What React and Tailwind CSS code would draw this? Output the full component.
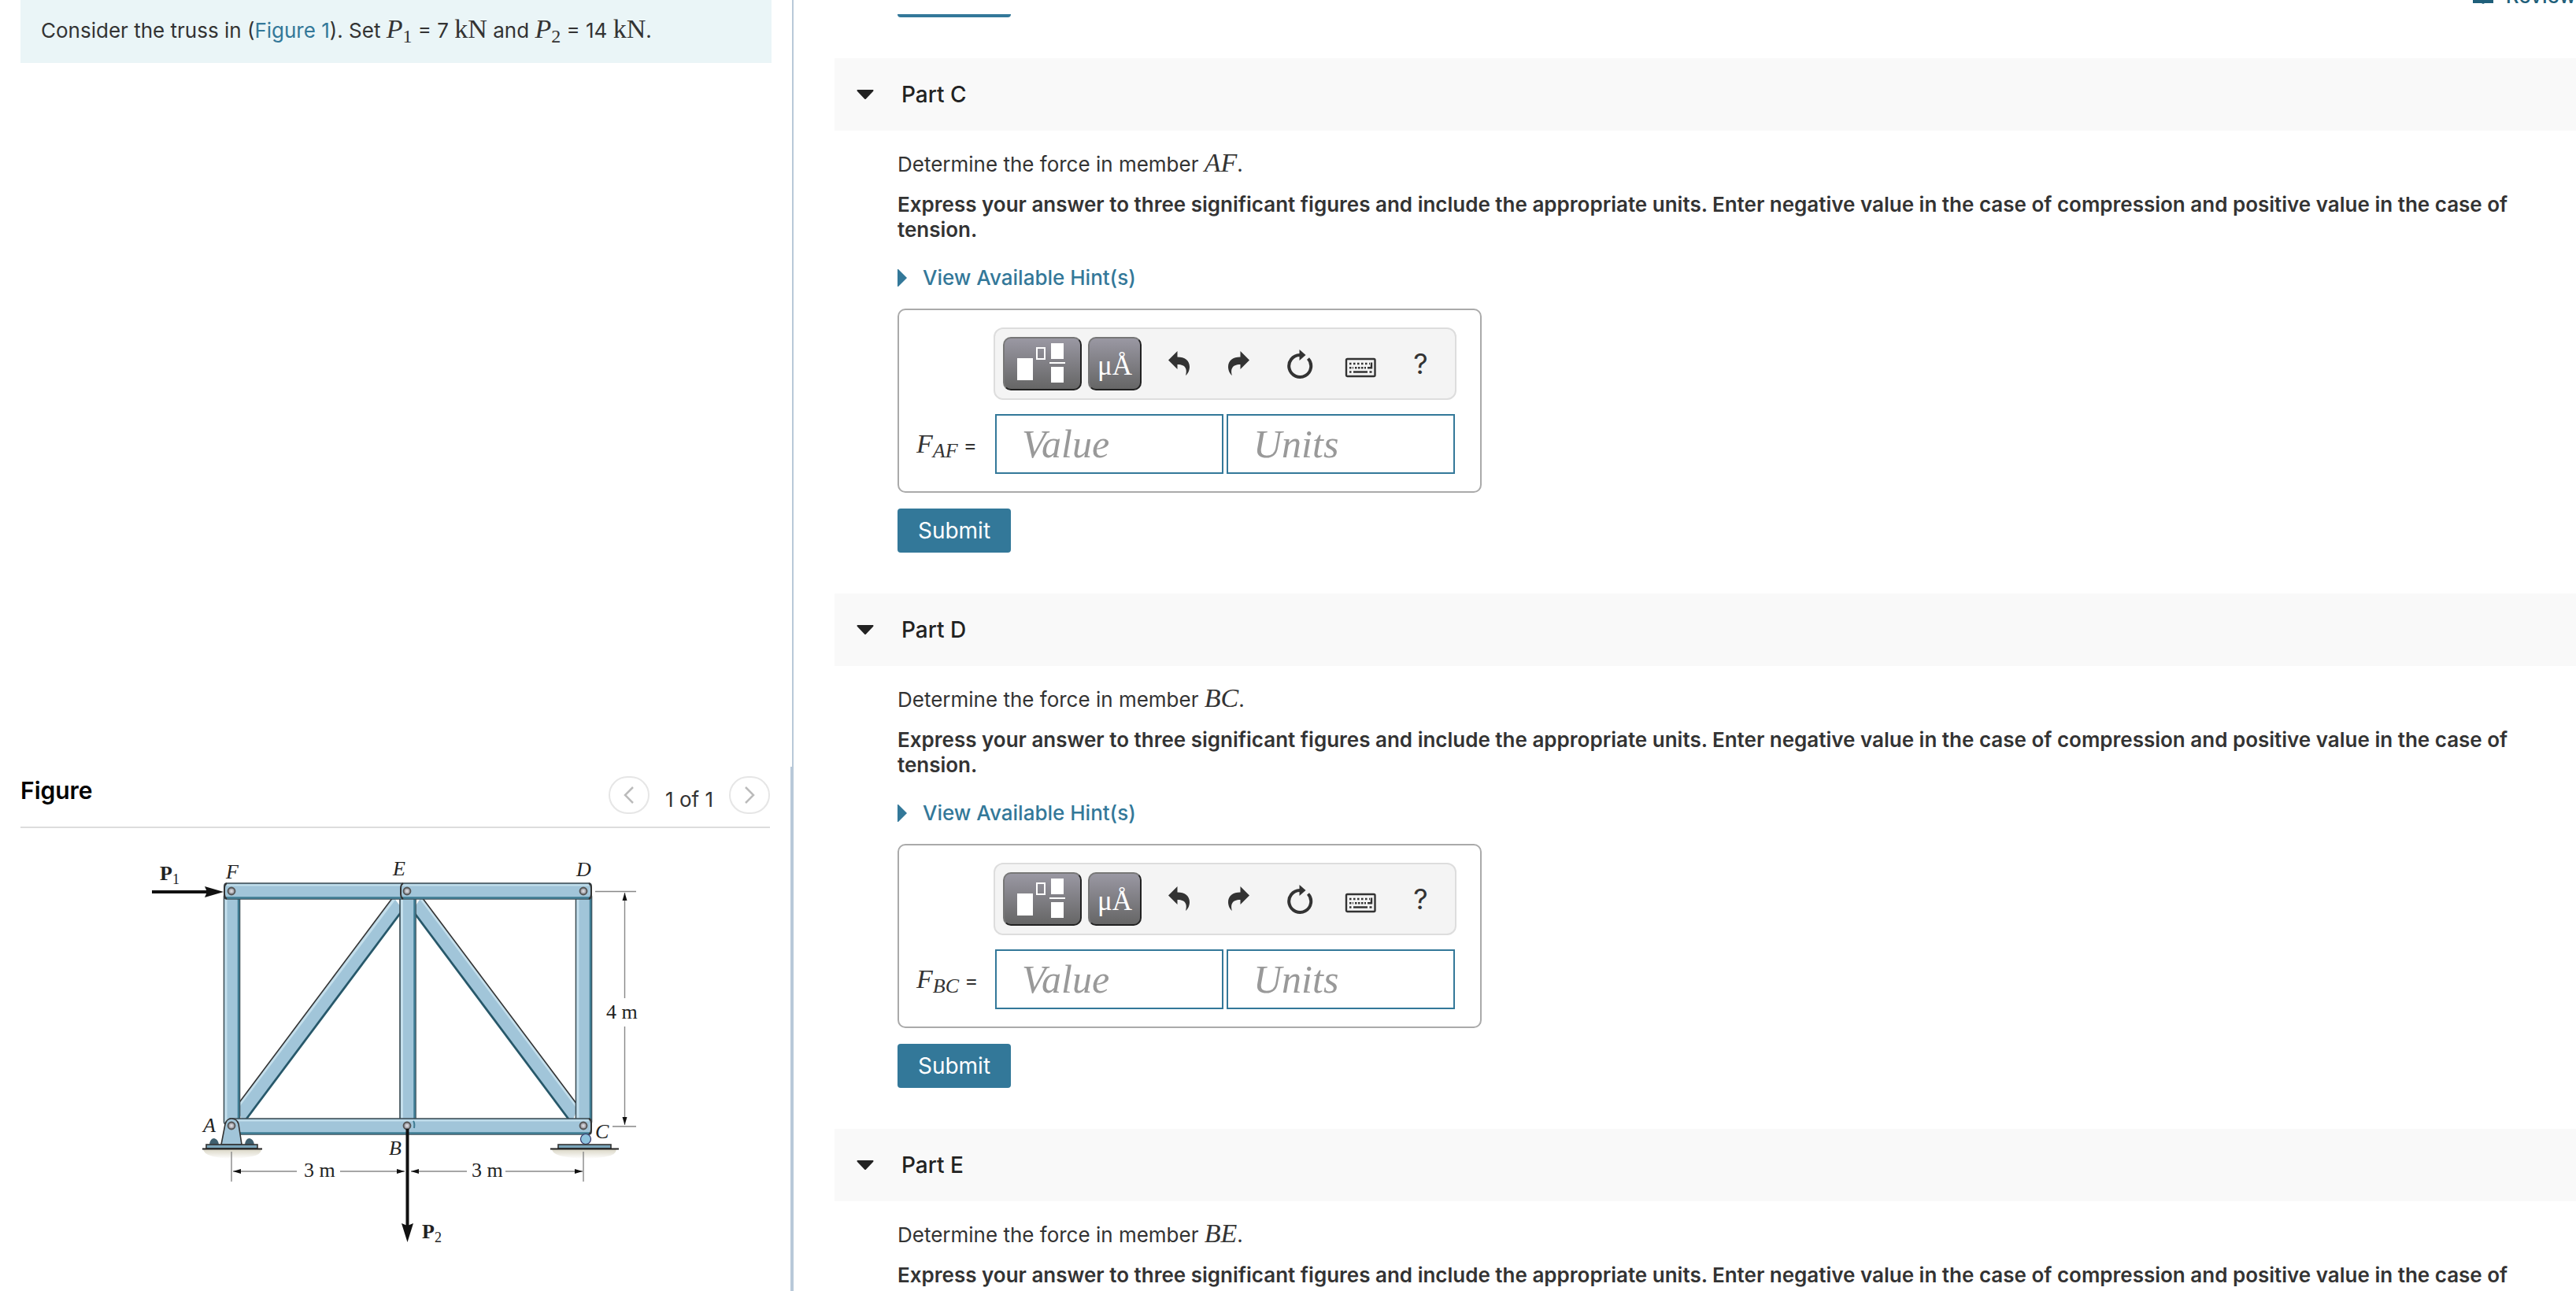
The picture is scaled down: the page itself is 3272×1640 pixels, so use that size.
import { useState } from 'react';

const PARTS = [
  { letter: 'C', member: 'AF' },
  { letter: 'D', member: 'BC' },
  { letter: 'E', member: 'BE' },
];

const PINS = [
  [294, 1132],
  [517, 1132],
  [741, 1132],
  [294, 1430],
  [517, 1430],
  [741, 1430],
];

function Math({ children, upright }) {
  return (
    <span className={`font-['Liberation_Serif',serif] text-[34px] leading-none ${upright ? '' : 'italic'}`}>
      {children}
    </span>
  );
}

function Sub({ children }) {
  return <sub className="text-[24px] leading-none not-italic">{children}</sub>;
}

function UndoIcon({ className }) {
  return (
    <svg viewBox="0 0 40 40" className={`size-10 ${className || ''}`} fill="#333">
      <path d="M7 15.500 18.500 4v7.500C28 11.500 34 16 34 24c0 5-2.500 9-5 11 2-7 1-14-10.500-14v6z" />
    </svg>
  );
}

function ResetIcon() {
  return (
    <svg viewBox="0 0 40 40" className="size-10">
      <path d="M30.500 13.500A14 14 0 1 1 20 9" fill="none" stroke="#333" strokeWidth="4" />
      <path d="M19.500 2 27.500 9 19.500 16z" fill="#333" />
    </svg>
  );
}

function KeyboardIcon() {
  return (
    <svg viewBox="0 0 40 40" className="size-10">
      <rect x="2" y="14" width="36.500" height="22" rx="1.500" fill="none" stroke="#333" strokeWidth="2.400" />
      <g stroke="#333" strokeWidth="2.400" fill="none">
        <path d="M6 20h26" strokeDasharray="2.500 2.500" />
        <path d="M6 25.200h5M13 25.200h14" strokeDasharray="2.500 1.500" />
        <path d="M34 18.500v6.700h-5" />
        <path d="M6 30.500h2.500M11 30.500h18M31.500 30.500h3" />
      </g>
    </svg>
  );
}

function TemplateIcon() {
  return (
    <svg viewBox="0 0 64 52" className="h-[52px] w-16" fill="#fff">
      <rect x="0" y="19" width="20" height="28" />
      <rect x="25" y="6" width="10" height="14" fill="none" stroke="#fff" strokeWidth="2" />
      <rect x="43" y="0" width="16" height="20" />
      <rect x="41" y="24" width="20" height="2" />
      <rect x="43" y="30" width="16" height="20" />
    </svg>
  );
}

function Toolbar() {
  const dark =
    'flex h-[68px] items-center justify-center rounded-[10px] border-2 border-t-[#777] border-l-[#777] border-r-[#222] border-b-[#222] bg-linear-to-b from-[#9a98a3] to-[#666] text-white';
  const plain = 'flex h-[68px] w-[77px] items-center justify-center text-[#333]';
  return (
    <div className="flex h-[92px] items-center rounded-xl border-2 border-[#ddd] bg-[#f4f4f4] pl-2.5">
      <button type="button" aria-label="Templates" className={`${dark} w-[100px]`}>
        <TemplateIcon />
      </button>
      <button type="button" className={`${dark} ml-2 w-[68px] pt-1.5 font-['Liberation_Serif',serif] text-[35px]`}>
        μÅ
      </button>
      <div className="ml-2 flex">
        <button type="button" aria-label="Undo" className={plain}>
          <UndoIcon />
        </button>
        <button type="button" aria-label="Redo" className={plain}>
          <UndoIcon className="-scale-x-100" />
        </button>
        <button type="button" aria-label="Reset" className={plain}>
          <ResetIcon />
        </button>
        <button type="button" aria-label="Keyboard shortcuts" className={plain}>
          <KeyboardIcon />
        </button>
        <button type="button" className={`${plain} text-[36px]`}>
          ?
        </button>
      </div>
    </div>
  );
}

function AnswerBox({ member }) {
  const [value, setValue] = useState('');
  const [units, setUnits] = useState('');
  const field =
    "h-[76px] w-[290px] border-2 border-[#337899] bg-white pl-8 font-['Liberation_Serif',serif] text-[50px] italic text-[#333] placeholder:text-[#999] outline-none";
  return (
    <div className="mt-[23px] grid w-fit grid-cols-[98px_588px] gap-y-[18px] rounded-[10px] border-2 border-[#aaa] py-[22px] pr-[30px] pl-[22px]">
      <div className="col-start-2">
        <Toolbar />
      </div>
      <label htmlFor={`value-${member}`} className="flex items-center whitespace-nowrap">
        <span>
          <Math>
            F<sub className="text-[26px] leading-none">{member}</sub>
          </Math>{' '}
          =
        </span>
      </label>
      <div className="flex gap-1 pl-0.5">
        <input
          id={`value-${member}`}
          className={field}
          placeholder="Value"
          value={value}
          onChange={(e) => setValue(e.target.value)}
        />
        <input
          aria-label="Units"
          className={field}
          placeholder="Units"
          value={units}
          onChange={(e) => setUnits(e.target.value)}
        />
      </div>
    </div>
  );
}

function Part({ letter, member }) {
  return (
    <section>
      <h2>
        <button type="button" className="flex h-[92px] w-full items-center bg-[#f9f9f9] pl-7 text-[28px] font-medium text-[#222]">
          <svg viewBox="0 0 22 12" className="mr-[35px] h-3 w-[22px]" fill="#222">
            <path d="M1 0h20q1 1 0 2l-9 9.500q-1 1-2 0L1 2Q0 1 1 0z" />
          </svg>
          Part {letter}
        </button>
      </h2>
      <div className="pt-6 pr-20 pb-[52px] pl-20">
        <p className="h-8">
          Determine the force in member <Math>{member}</Math>.
        </p>
        <p className="mt-[22px] font-semibold">
          Express your answer to three significant figures and include the appropriate units. Enter negative value in
          the case of compression and positive value in the case of tension.
        </p>
        <button type="button" className="mt-[29px] flex h-8 items-center font-medium text-[#337899]">
          <svg viewBox="0 0 12 22" className="mr-5 h-[22px] w-3" fill="#337899">
            <path d="M0 0h1l11 11L1 22H0z" />
          </svg>
          View Available Hint(s)
        </button>
        <AnswerBox member={member} />
        <button type="button" className="mt-5 block h-14 w-36 rounded-[4px] bg-[#337899] text-[28px] text-white">
          Submit
        </button>
      </div>
    </section>
  );
}

// straight member: body, light edge on the upper left, dark edge on the lower right
function Beam({ x, y, w, h }) {
  const flat = w > h;
  return (
    <g>
      <rect x={x} y={y} width={w} height={h} rx="3" fill="#a1c5d9" stroke="#3a4a52" strokeWidth="1.600" />
      {flat ? (
        <>
          <path d={`M${x + 3} ${y + 2.5}h${w - 6}`} stroke="#c4dfec" strokeWidth="2" />
          <path d={`M${x + 2} ${y + h - 1.5}h${w - 4}`} stroke="#3f7c93" strokeWidth="2.500" />
        </>
      ) : (
        <>
          <path d={`M${x + 2.5} ${y + 2}v${h - 4}`} stroke="#c4dfec" strokeWidth="3" />
          <path d={`M${x + w - 1.5} ${y + 2}v${h - 4}`} stroke="#3f7c93" strokeWidth="2.500" />
        </>
      )}
    </g>
  );
}

function Truss() {
  return (
    <svg
      viewBox="180 1080 640 510"
      className="ml-[180px] h-[510px] w-[640px]"
      fontFamily="'Liberation Serif', serif"
      fontSize="26"
      fill="#222"
      role="img"
      aria-label="Truss ABCDEF"
    >
      <defs>
        <radialGradient id="pin">
          <stop offset="0" stopColor="#e8e8ec" />
          <stop offset="1" stopColor="#85858d" />
        </radialGradient>
        <linearGradient id="ground" x1="0" y1="0" x2="0" y2="1">
          <stop offset="0" stopColor="#d6d2c0" />
          <stop offset="1" stopColor="#fff" />
        </linearGradient>
        <marker id="tip" viewBox="0 0 10 8" markerWidth="10" markerHeight="8" refX="10" refY="4" orient="auto-start-reverse" markerUnits="userSpaceOnUse">
          <path d="M0 1 10 4 0 7z" fill="#111" />
        </marker>
      </defs>

      {/* ground under the supports */}
      <path d="M258 1459h74q0 8-12 10-26 6-50 0-12-3-12-10z" fill="url(#ground)" />
      <path d="M701 1459h82q0 8-12 10-28 6-56 0-14-3-14-10z" fill="url(#ground)" />

      {/* diagonals */}
      <path d="M500 1140 300 1406 309 1426 512 1156z" fill="#a1c5d9" />
      <path d="M501 1142 303 1405" stroke="#c4dfec" strokeWidth="3" />
      <path d="M499 1140 302 1403" stroke="#333" strokeWidth="1.600" />
      <path d="M510 1158 311 1424" stroke="#27586a" strokeWidth="2.800" />
      <path d="M535 1140 735 1406 726 1426 524 1156z" fill="#a1c5d9" />
      <path d="M535 1142 732 1405" stroke="#c4dfec" strokeWidth="3" />
      <path d="M536 1140 733 1403" stroke="#333" strokeWidth="1.600" />
      <path d="M525 1158 724 1424" stroke="#27586a" strokeWidth="2.800" />

      {/* posts and chords */}
      <Beam x={284.5} y={1136} w={20} h={292} />
      <Beam x={508} y={1136} w={20} h={292} />
      <Beam x={731.5} y={1136} w={20} h={292} />
      <Beam x={285} y={1122} w={466} h={20} />
      <Beam x={290} y={1421} w={461} h={20} />
      <path d="M512 1122q-3 2-3 6v8q0 4 3 6" fill="none" stroke="#333" strokeWidth="2" />
      <path d="M288 1122q-3 2-3 6v8q0 4 3 6" fill="none" stroke="#333" strokeWidth="2" />
      <path d="M748 1122q3 2 3 6v8q0 4-3 6" fill="none" stroke="#333" strokeWidth="2" />
      <path d="M748 1421q3 2 3 6v8q0 4-3 6" fill="none" stroke="#333" strokeWidth="2" />
      <path d="M525 1424q2 3 1 9" fill="none" stroke="#3f7c93" strokeWidth="2" />

      {/* pin support A */}
      <path d="M281 1454 286 1428q2-7 8-7 7 0 9 7l4 26z" fill="#a1c5d9" stroke="#333" strokeWidth="1.600" />
      <path d="M266 1454q1-8 6-8 5 1 6 8zM311 1454q1-8 6-8 5 1 6 8z" fill="#3f5f6e" />
      <rect x="262" y="1454" width="65" height="5" fill="#7aa5ba" stroke="#333" strokeWidth="1.600" />
      <path d="M257 1459.500h76" stroke="#222" strokeWidth="2" />

      {/* roller support C */}
      <circle cx="744" cy="1447" r="6.500" fill="#8ec3de" stroke="#336" strokeWidth="1.200" />
      <rect x="709" y="1454" width="67" height="5" fill="#7aa5ba" stroke="#333" strokeWidth="1.600" />
      <path d="M699 1459.500h87" stroke="#222" strokeWidth="2" />

      {PINS.map(([x, y]) => (
        <circle key={`${x}-${y}`} cx={x} cy={y} r="4.500" fill="url(#pin)" stroke="#555" strokeWidth="1.800" />
      ))}

      {/* dimensions */}
      <g stroke="#888" strokeWidth="1.400">
        <path d="M756 1132.500h52M778 1431h30M294 1463v38M741 1463v38" />
        <path d="M793.500 1268V1134" markerEnd="url(#tip)" />
        <path d="M793.500 1304v125" markerEnd="url(#tip)" />
        <path d="M377 1488h-81" markerEnd="url(#tip)" />
        <path d="M432 1488h82" markerEnd="url(#tip)" />
        <path d="M593 1488h-71" markerEnd="url(#tip)" />
        <path d="M642 1488h98" markerEnd="url(#tip)" />
      </g>

      {/* loads */}
      <path d="M193 1133h70" stroke="#111" strokeWidth="4" />
      <path d="M260 1126 284 1133 260 1140 263 1133z" fill="#111" />
      <path d="M517.500 1434v124" stroke="#111" strokeWidth="4" />
      <path d="M510 1554 517.500 1578 525 1554 517.500 1557z" fill="#111" />

      <text x="203" y="1118" fontWeight="bold">P</text>
      <text x="219" y="1123" fontSize="18">1</text>
      <text x="536" y="1573" fontWeight="bold">P</text>
      <text x="552" y="1578" fontSize="18">2</text>
      <g fontStyle="italic">
        <text x="287" y="1116">F</text>
        <text x="499" y="1112">E</text>
        <text x="732" y="1113">D</text>
        <text x="258" y="1438">A</text>
        <text x="494" y="1467">B</text>
        <text x="756" y="1446">C</text>
      </g>
      <text x="770" y="1294">4 m</text>
      <text x="386" y="1495">3 m</text>
      <text x="599" y="1495">3 m</text>
    </svg>
  );
}

function FigurePanel() {
  const circle = 'flex h-12 w-[52px] items-center justify-center rounded-full border-2 border-[#e6e6e6]';
  return (
    <div className="h-[666px] border-r-2 border-[#b9c9d9]">
      <div className="mr-[26px] ml-[26px] flex h-[78px] items-start border-b-2 border-[#ddd] pt-3">
        <h2 className="flex-1 text-[30px] leading-9 font-semibold text-black">Figure</h2>
        <button type="button" aria-label="Previous figure" className={circle}>
          <svg viewBox="0 0 14 22" className="h-[22px] w-3.5" fill="none" stroke="#bbb" strokeWidth="2.500">
            <path d="M12 1 2 11l10 10" />
          </svg>
        </button>
        <span className="px-5 pt-3.5">1 of 1</span>
        <button type="button" aria-label="Next figure" className={circle}>
          <svg viewBox="0 0 14 22" className="h-[22px] w-3.5" fill="none" stroke="#bbb" strokeWidth="2.500">
            <path d="m2 1 10 10L2 21" />
          </svg>
        </button>
      </div>
      <div className="pt-7">
        <Truss />
      </div>
    </div>
  );
}

export default function App() {
  return (
    <div className="flex h-screen overflow-hidden bg-white font-['Inter',sans-serif] text-[26px] leading-8 text-[#333]">
      <aside className="flex w-[1008px] shrink-0 flex-col border-r-2 border-[#b9c9d9]">
        <div className="flex-1">
          <p className="mr-[26px] ml-[26px] h-20 bg-[#eaf5f7] px-[26px] pt-5">
            Consider the truss in (
            <a href="#figure" className="text-[#337899]">
              Figure 1
            </a>
            ). Set <Math>P<Sub>1</Sub></Math> = 7 <Math upright>kN</Math> and <Math>P<Sub>2</Sub></Math> = 14{' '}
            <Math upright>kN</Math>.
          </p>
        </div>
        <FigurePanel />
      </aside>

      <main className="flex-1 overflow-hidden pl-[52px]">
        {/* bottom edge of the sticky bar */}
        <div className="flex h-[18px] items-start justify-end overflow-hidden">
          <a href="#review" className="-mt-[21px] flex items-center gap-4 font-medium text-[#1f5f7a]">
            <svg viewBox="0 0 26 22" className="h-[22px] w-[26px]" fill="#1f5f7a">
              <path d="M0 0h11q2 0 2 2 0-2 2-2h11v20H15l-2 1-2-1H0z" />
            </svg>
            Review
          </a>
        </div>
        <div className="mb-[52px] ml-20 h-1 w-36 rounded-b-[4px] bg-[#337899]" />
        {PARTS.map((part) => (
          <Part key={part.letter} {...part} />
        ))}
      </main>
    </div>
  );
}
